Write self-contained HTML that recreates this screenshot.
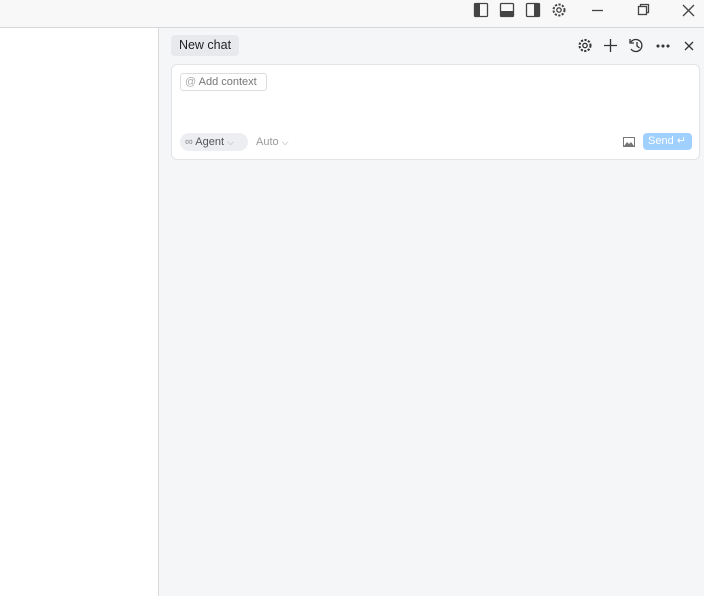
<!DOCTYPE html>
<html><head><style>
*{margin:0;padding:0;box-sizing:border-box}
body{width:704px;height:596px;overflow:hidden;font-family:"Liberation Sans","DejaVu Sans",sans-serif;background:#f5f6f8;position:relative}
.top{position:absolute;left:0;top:0;width:704px;height:28px;background:#f8f8f9;border-bottom:1px solid #d6d7da}
.left{position:absolute;left:0;top:28px;width:159px;height:568px;background:#fff;border-right:1px solid #d8d9dc}
.abs{position:absolute}
svg{position:absolute}
.tab{position:absolute;left:171px;top:35px;width:68px;height:21px;background:#e8e9ed;border-radius:4px;font-size:12.5px;color:#222;line-height:21px;text-align:center}
.box{position:absolute;left:171px;top:64px;width:529px;height:96px;background:#fff;border:1px solid #e3e4e8;border-radius:6px}
.ctx{position:absolute;left:8px;top:8px;width:87px;height:18px;border:1px solid #dcdde1;border-radius:3px;font-size:11px;color:#777;line-height:16px;padding-left:4px}
.agent{position:absolute;left:8px;top:68px;width:68px;height:18px;background:#eceef1;border-radius:9px;font-size:11px;color:#555;line-height:18px;padding-left:5px}
.auto{position:absolute;left:84px;top:68px;font-size:11px;color:#999;line-height:18px}
.send{position:absolute;left:471px;top:68px;width:49px;height:17px;background:#9fd0ff;border-radius:4px;font-size:11px;color:#fff;line-height:17px;padding-left:5px}
</style></head><body>
<div class="top"></div>
<svg width="704" height="28" viewBox="0 0 704 28" fill="none" stroke="#444" stroke-width="1.3">
<rect x="474.5" y="3.5" width="13" height="13" rx="1"/><rect x="475" y="4" width="5" height="12" fill="#444" stroke="none"/>
<rect x="500.5" y="3.5" width="13" height="13" rx="1"/><rect x="501" y="11" width="12" height="5" fill="#444" stroke="none"/>
<rect x="526.5" y="3.5" width="13" height="13" rx="1"/><rect x="534" y="4" width="5" height="12" fill="#444" stroke="none"/>
<circle cx="559" cy="10" r="2.2"/><circle cx="559" cy="10" r="5.5" stroke-dasharray="2.2 1.4" stroke-width="2"/>
<line x1="592" y1="10.5" x2="603" y2="10.5"/>
<rect x="638.5" y="6.5" width="8" height="8"/><path d="M640.5 6.5V4.5h8v8h-2"/>
<path d="M683 5l11 11M694 5l-11 11"/>
</svg>
<div class="left"></div>
<div class="tab">New chat</div>
<svg width="704" height="60" viewBox="0 0 704 60" fill="none" stroke="#333" stroke-width="1.3" style="left:0;top:0">
<circle cx="585" cy="45.5" r="2.2"/><circle cx="585" cy="45.5" r="5.5" stroke-dasharray="2.2 1.4" stroke-width="2"/>
<path d="M610.5 39v13M604 45.5h13"/>
<path d="M631 42a6 6 0 1 1 0 7M630 39v4h4M637 42v4l2.5 2"/>
<circle cx="658" cy="46" r="0.9" fill="#333"/><circle cx="663" cy="46" r="0.9" fill="#333"/><circle cx="668" cy="46" r="0.9" fill="#333"/>
<path d="M685 42l8 8M693 42l-8 8"/>
</svg>
<div class="box">
<div class="ctx"><span style="color:#aaa">@</span> Add context</div>
<div class="agent"><span style="color:#888">∞</span> Agent <span style="color:#aaa;font-size:9px">⌵</span></div>
<div class="auto">Auto <span style="font-size:9px">⌵</span></div>
<svg width="12" height="10" style="left:451px;top:72px"><rect x="0.5" y="0.5" width="11" height="9" fill="#fff" stroke="#777"/><path d="M1 9l3-4 2 2 2-2 3 4z" fill="#777"/></svg>
<div class="send">Send ↵</div>
</div>
</body></html>
